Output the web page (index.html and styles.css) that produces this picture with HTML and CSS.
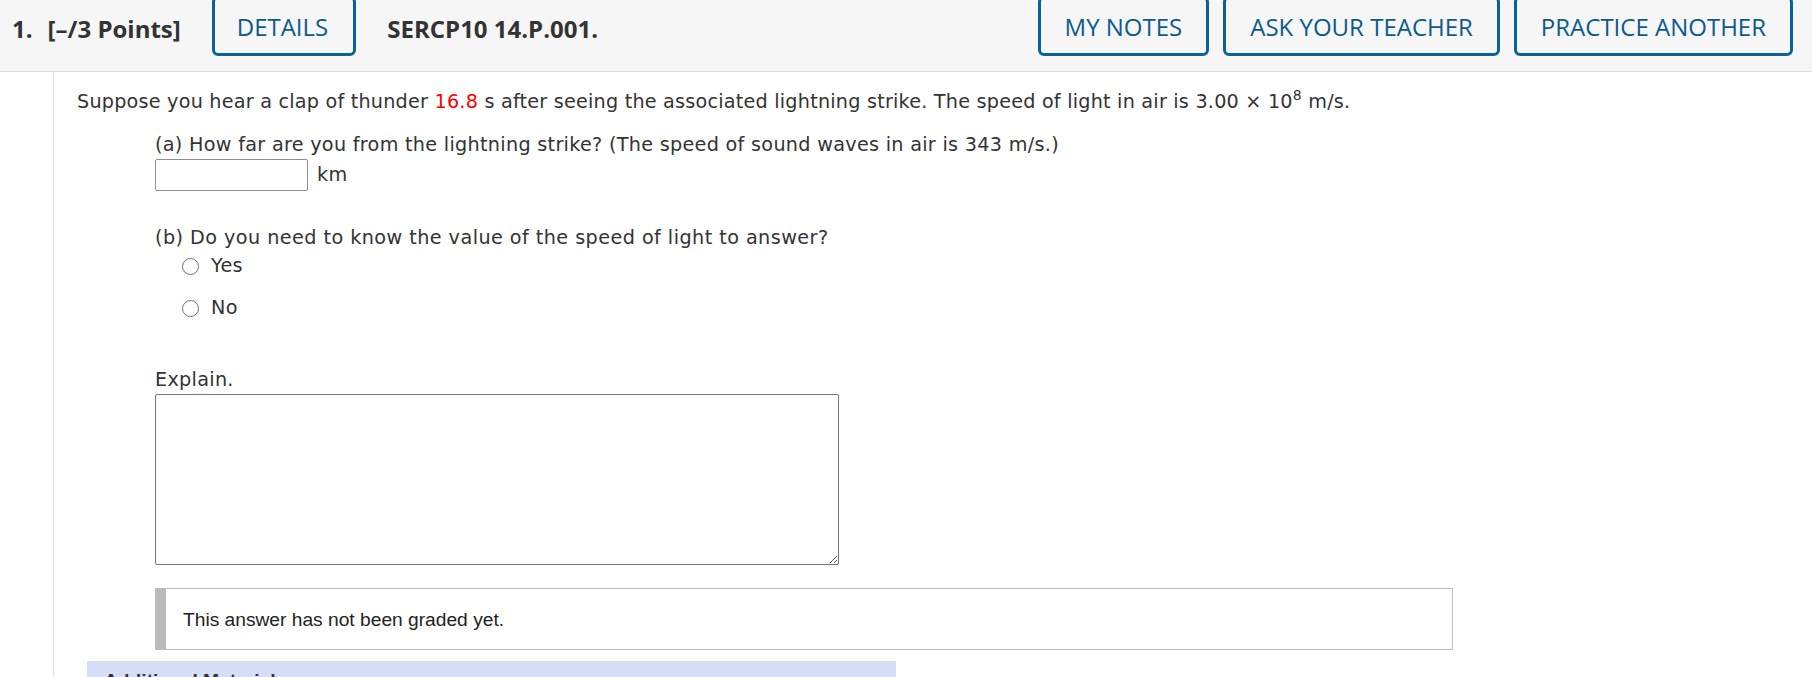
FILE: index.html
```html
<!DOCTYPE html>
<html lang="en">
<head>
<meta charset="utf-8">
<title>SERCP10 14.P.001</title>
<link rel="stylesheet" href="styles.css">
</head>
<body>
<div class="page">
  <header class="qhead">
    <div class="qlabel"><span class="qnum">1.</span><span>[–/3 Points]</span></div>
    <a class="hbtn details">DETAILS</a>
    <div class="qlabel qcode">SERCP10 14.P.001.</div>
    <div class="hspacer"></div>
    <a class="hbtn">MY NOTES</a>
    <a class="hbtn">ASK YOUR TEACHER</a>
    <a class="hbtn">PRACTICE ANOTHER</a>
  </header>
  <main class="qbody">
    <p class="intro">Suppose you hear a clap of thunder <span class="red">16.8</span> s after seeing the associated lightning strike. The speed of light in air is 3.00 × 10<sup>8</sup> m/s.</p>
    <div class="part">
      <p class="line">(a) How far are you from the lightning strike? (The speed of sound waves in air is 343 m/s.)</p>
      <div class="answer-row">
        <input class="num-input" type="text" aria-label="distance">
        <span class="line">km</span>
      </div>
      <p class="line part-b">(b) Do you need to know the value of the speed of light to answer?</p>
      <label class="radio-row"><input class="radio" type="radio" name="b"><span>Yes</span></label>
      <label class="radio-row second"><input class="radio" type="radio" name="b"><span>No</span></label>
      <p class="line explain">Explain.</p>
      <textarea class="explain-box" aria-label="explain"></textarea>
      <div class="graded">This answer has not been graded yet.</div>
    </div>
    <div class="materials">Additional Materials</div>
  </main>
</div>
</body>
</html>
```
FILE: styles.css
```css
html, body {
  margin: 0;
  padding: 0;
  background: #ffffff;
}
body {
  font-family: "DejaVu Sans", Verdana, sans-serif;
  color: #333333;
  overflow: hidden;
}
.page {
  width: 1812px;
}
.qhead {
  display: flex;
  align-items: flex-start;
  height: 71px;
  background: #f6f6f6;
  border-bottom: 1px solid #dddddd;
  padding: 0 19px 0 12px;
  font-family: "Open Sans", sans-serif;
  font-size: 24px;
  overflow: hidden;
}
.qlabel {
  display: flex;
  align-items: center;
  height: 56px;
  font-weight: 700;
  color: #333333;
  white-space: nowrap;
}
.qnum {
  margin-right: 15px;
}
.qcode {
  margin-left: 31px;
}
.hspacer {
  flex: 1;
}
.hbtn {
  display: flex;
  align-items: center;
  box-sizing: border-box;
  height: 60px;
  margin-top: -4px;
  padding: 0 24px;
  border: 3px solid #0a6299;
  border-radius: 6px;
  color: #0c5a8e;
  white-space: nowrap;
  margin-left: 14px;
}
.hbtn.details {
  margin-left: 31px;
  padding: 0 25px 0 22px;
}
.qbody {
  margin-left: 53px;
  border-left: 1px solid #dddddd;
  padding: 18px 0 0 0;
  min-height: 700px;
  font-size: 19.2px;
  line-height: 24px;
  letter-spacing: 0.3px;
}
.intro {
  margin: 0 0 0 23px;
  letter-spacing: 0.22px;
}
.red {
  color: #ff0000;
}
sup {
  font-size: 14px;
  line-height: 0;
  vertical-align: 8px;
}
.part {
  margin-left: 101px;
}
.line {
  margin: 0;
}
.part > .line:first-child {
  margin-top: 19px;
}
.answer-row {
  display: flex;
  align-items: center;
  gap: 9px;
  margin-top: 2px;
}
.num-input {
  box-sizing: border-box;
  width: 153px;
  height: 32px;
  margin: 0;
  border: 1px solid #8f8f8f;
  border-radius: 2px;
  background: #ffffff;
}
.part-b {
  margin-top: 35px;
  letter-spacing: 0.45px;
}
.radio-row {
  display: flex;
  align-items: center;
  gap: 12px;
  margin: 4px 0 0 27px;
}
.radio-row.second {
  margin-top: 18px;
}
.radio {
  appearance: none;
  -webkit-appearance: none;
  box-sizing: border-box;
  width: 17px;
  height: 17px;
  margin: 0;
  border: 1px solid #6f6f6f;
  border-radius: 50%;
  background: #ffffff;
}
.explain {
  margin-top: 48px;
}
.explain-box {
  display: block;
  box-sizing: border-box;
  width: 684px;
  height: 171px;
  margin: 2px 0 0 0;
  border: 1px solid #767676;
  border-radius: 2px;
  resize: both;
  background: #ffffff;
}
.graded {
  box-sizing: border-box;
  width: 1298px;
  height: 62px;
  margin-top: 23px;
  padding: 20px 0 0 17px;
  border: 1px solid #bbbbbb;
  border-left: 11px solid #bbbbbb;
  font-family: "Liberation Sans", Arial, sans-serif;
  font-size: 19.2px;
  line-height: 22px;
  letter-spacing: 0;
  color: #222222;
}
.materials {
  box-sizing: border-box;
  width: 809px;
  margin: 11px 0 0 33px;
  padding: 9px 17px;
  background: #d6ddf6;
  font-family: "Liberation Sans", Arial, sans-serif;
  font-weight: 700;
  font-size: 19.2px;
  line-height: 22px;
  letter-spacing: 0;
  color: #333333;
}
```
